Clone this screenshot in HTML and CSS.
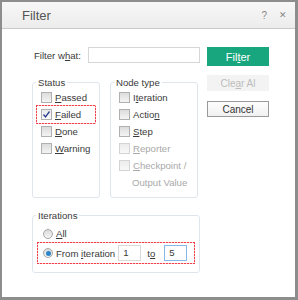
FILE: index.html
```html
<!DOCTYPE html>
<html lang="en">
<head>
    <meta charset="UTF-8">
    <title>Filter</title>
    <link rel="stylesheet" href="styles.css">
</head>
<body>

    <!-- Filter dialog -->
    <div class="window">
        <div class="titlebar">
            <span class="title">Filter</span>
            <span class="title-btns"><span>?</span><span class="close">&#x2715;</span></span>
        </div>

        <div class="main">
            <div class="left">
                <div class="filter-row">
                    <label>Filter w<u>h</u>at:</label>
                    <span class="text-input"></span>
                </div>

                <div class="groups">
                    <fieldset class="group status">
                        <legend>Status</legend>
                        <div class="item"><span class="box"></span><span><u>P</u>assed</span></div>
                        <div class="item marked"><span class="box checked"><svg width="9" height="9" viewBox="0 0 9 9"><polyline points="1.5,4.5 3.5,7 7.5,1.5" fill="none" stroke="#2c3e91" stroke-width="1.3"/></svg></span><span><u>F</u>ailed</span></div>
                        <div class="item"><span class="box"></span><span><u>D</u>one</span></div>
                        <div class="item"><span class="box"></span><span><u>W</u>arning</span></div>
                    </fieldset>

                    <fieldset class="group nodes">
                        <legend>Node type</legend>
                        <div class="item"><span class="box"></span><span>I<u>t</u>eration</span></div>
                        <div class="item"><span class="box"></span><span>Actio<u>n</u></span></div>
                        <div class="item"><span class="box"></span><span><u>S</u>tep</span></div>
                        <div class="item disabled"><span class="box"></span><span><u>R</u>eporter</span></div>
                        <div class="item disabled"><span class="box"></span><span><u>C</u>heckpoint /</span></div>
                        <div class="item disabled indent"><span>Output Value</span></div>
                    </fieldset>
                </div>

                <fieldset class="group iterations">
                    <legend>Iterations</legend>
                    <div class="item radio-row"><span class="radio"></span><span><u>A</u>ll</span></div>
                    <div class="item radio-row marked">
                        <span class="radio on"></span>
                        <span>From <u>i</u>teration</span>
                        <span class="num-input">1</span>
                        <span class="to">t<u>o</u></span>
                        <span class="num-input focus">5</span>
                    </div>
                </fieldset>
            </div>

            <div class="buttons">
                <button class="btn primary">Fil<u>t</u>er</button>
                <button class="btn disabled-btn">Cle<u>a</u>r Al</button>
                <button class="btn cancel">Cancel</button>
            </div>
        </div>
    </div>

</body>
</html>
```

FILE: styles.css
```css
/* Reset default styles */
* {
    margin: 0;
    padding: 0;
    box-sizing: border-box;
}

body {
    font-family: "Liberation Sans", Arial, sans-serif;
    font-size: 9.6px;
    color: #3a3a3a;
    background: #fff;
}

u {
    text-decoration: underline;
    text-underline-offset: 1px;
}

/* Dialog frame */
.window {
    width: 298px;
    height: 300px;
    border-style: solid;
    border-color: #8d8d8d;
    border-width: 2px 3px 3px 2px;
    background: #fff;
}

.titlebar {
    height: 27px;
    display: flex;
    align-items: center;
    justify-content: space-between;
    padding: 0 8px 0 20px;
    background: linear-gradient(#f7f7f7, #ececec);
    border-bottom: 1px solid #c9c9c9;
}

.title {
    font-size: 13px;
    color: #555;
}

.title-btns {
    display: flex;
    gap: 12px;
    color: #888;
    font-size: 10px;
}

.title-btns .close {
    font-size: 9px;
}

/* Main content */
.main {
    display: flex;
    gap: 7px;
    padding: 18px 0 0 30px;
}

.left {
    width: 168px;
}

.filter-row {
    display: flex;
    align-items: center;
    justify-content: space-between;
    height: 16px;
    padding-left: 2px;
}

.text-input {
    width: 112px;
    height: 16px;
    border: 1px solid #d6d6d6;
    background: #fff;
}

.groups {
    display: flex;
    gap: 10px;
    margin-top: 13px;
}

.group {
    border: 1px solid #dfe5ec;
    border-radius: 3px;
    padding: 0 4px 6px 8px;
    min-width: 0;
}

.group legend {
    margin-left: -5px;
    padding: 0 2px;
    line-height: 13px;
}

.status {
    width: 68px;
}

.nodes {
    width: 88px;
}

.item {
    display: flex;
    align-items: center;
    height: 17px;
    white-space: nowrap;
}

.item.disabled {
    color: #a9a9a9;
}

.item.indent {
    padding-left: 13px;
}

/* red dotted marker drawn with gradients so the dots stay crisp */
.item.marked {
    height: 19px;
    margin: -1px -1px -1px -5px;
    padding-left: 5px;
    background:
        repeating-linear-gradient(90deg, #f2404a 0 2px, #fbc9cc 2px 3px) top left / 100% 1px no-repeat,
        repeating-linear-gradient(90deg, #f2404a 0 2px, #fbc9cc 2px 3px) bottom left / 100% 1px no-repeat,
        repeating-linear-gradient(180deg, #f2404a 0 2px, #fbc9cc 2px 3px) top left / 1px 100% no-repeat,
        repeating-linear-gradient(180deg, #f2404a 0 2px, #fbc9cc 2px 3px) top right / 1px 100% no-repeat;
}

/* Checkbox */
.box {
    width: 11px;
    height: 11px;
    margin-right: 3px;
    border: 1px solid #b0b0b0;
    background: linear-gradient(#dcdcdc, #f4f4f4);
    display: flex;
    align-items: center;
    justify-content: center;
}

.box.checked {
    background: linear-gradient(#eaeaea, #fbfbfb);
}

.disabled .box {
    border-color: #d4d4d4;
    background: linear-gradient(#ececec, #f8f8f8);
}

/* Iterations */
.iterations {
    margin-top: 11px;
    padding: 3px 4px 8px 4px;
}

.iterations legend {
    margin-left: -1px;
}

.radio-row {
    padding-left: 6px;
}

.radio-row.marked {
    height: 22px;
    margin: 0;
    padding-left: 6px;
}

.radio {
    width: 10px;
    height: 10px;
    margin-right: 3px;
    border-radius: 50%;
    border: 1px solid #a8a8a8;
    background: linear-gradient(#d9d9d9, #f6f6f6);
    display: flex;
    align-items: center;
    justify-content: center;
}

.radio.on::after {
    content: "";
    width: 5px;
    height: 5px;
    border-radius: 50%;
    background: #2a86c8;
}

.num-input {
    width: 23px;
    height: 16px;
    margin-left: 3px;
    padding-left: 4px;
    line-height: 14px;
    border: 1px solid #dadada;
}

.num-input.focus {
    border-color: #86b9ea;
}

.to {
    margin: 0 6px;
}

/* Buttons */
.buttons {
    width: 62px;
    display: flex;
    flex-direction: column;
}

.btn {
    font-family: "Liberation Sans", Arial, sans-serif;
    font-size: 10px;
    width: 62px;
    height: 16px;
    border: none;
    cursor: pointer;
}

.btn.primary {
    height: 19px;
    font-size: 11px;
    color: #fff;
    background-color: #17a67e;
}

.btn.disabled-btn {
    margin-top: 9px;
    color: #bcbcbc;
    background-color: #f3f3f3;
}

.btn.cancel {
    margin-top: 10px;
    color: #333;
    background: linear-gradient(#fdfdfd, #f1f1f1);
    border: 1px solid #9a9a9a;
}
```
